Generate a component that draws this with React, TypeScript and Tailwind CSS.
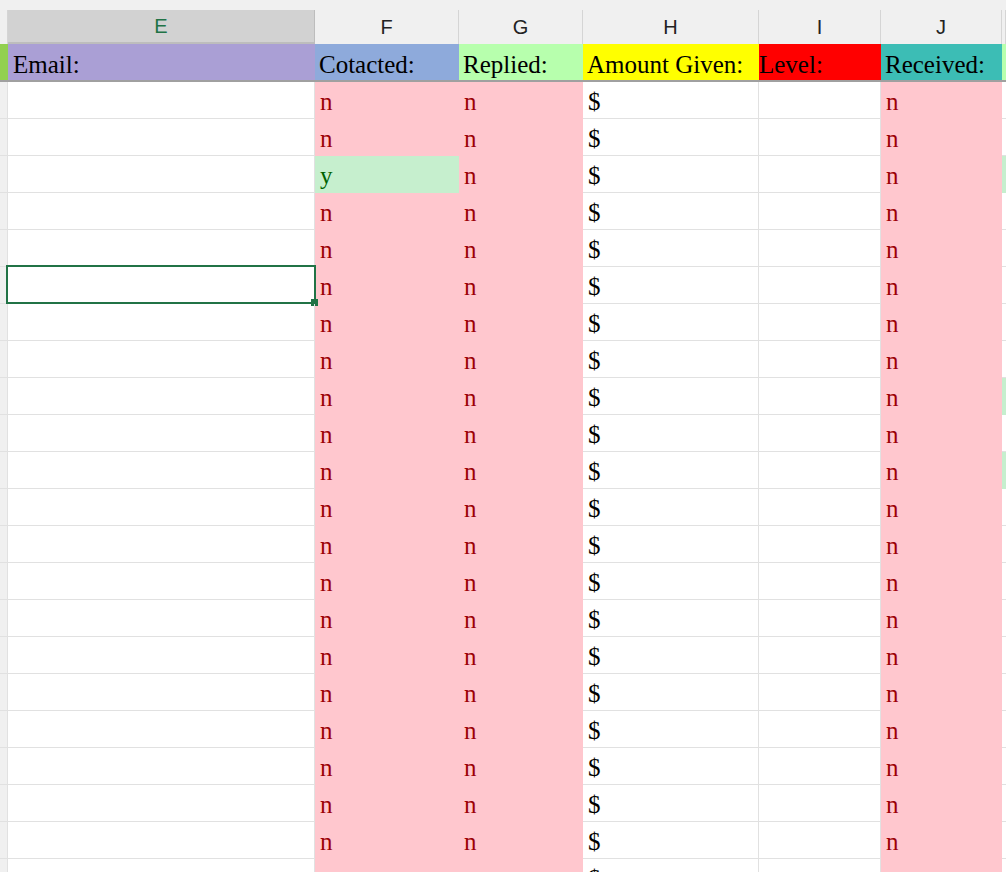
import React from "react";

const cols = ["", "E", "F", "G", "H", "I", "J", ""];
const N = 22;
const greenK = new Set([2, 8, 10]);

export default function App() {
  const serif = { fontFamily: '"Liberation Serif", "Times New Roman", serif' };
  const rows = Array.from({ length: N }, (_, i) => i);
  return (
    <div className="w-[1006px] h-[872px] overflow-hidden bg-white relative">
      <div className="h-[10px] bg-[#f0f0f0]" />
      <div className="grid grid-cols-[8px_307px_144px_124px_176px_122px_121px_4px] h-[34px] bg-[#f0f0f0] text-[20px] text-[#222]" style={{ fontFamily: '"Liberation Sans", Arial, sans-serif' }}>
        {cols.map((c, i) => (
          <div
            key={i}
            className={
              i === 1
                ? "bg-[#d2d2d2] border-b-2 border-[#217346] text-[#217346] flex items-center justify-center border-r border-[#bdbdbd]"
                : "flex items-center justify-center border-r border-[#d5d5d5]"
            }
          >
            {c}
          </div>
        ))}
      </div>
      <div className="grid grid-cols-[8px_307px_144px_124px_176px_122px_121px_4px] text-[25px]" style={serif}>
        <div className="h-[38px] bg-[#92d050] border-b-2 border-[#a0a0a0]" />
        <div className="h-[38px] bg-[#aa9fd5] border-b-2 border-[#a0a0a0] pl-[5px] leading-[42px] text-black">Email:</div>
        <div className="h-[38px] bg-[#8eaadb] border-b-2 border-[#a0a0a0] pl-[4px] leading-[42px] text-black">Cotacted:</div>
        <div className="h-[38px] bg-[#b7ffad] border-b-2 border-[#a0a0a0] pl-[4px] leading-[42px] text-black">Replied:</div>
        <div className="h-[38px] bg-[#ffff00] border-b-2 border-[#a0a0a0] pl-[4px] leading-[42px] text-black whitespace-nowrap overflow-hidden">Amount Given:</div>
        <div className="h-[38px] bg-[#ff0000] border-b-2 border-[#a0a0a0] leading-[42px] text-black whitespace-nowrap overflow-hidden">Level:</div>
        <div className="h-[38px] bg-[#3cbdb5] border-b-2 border-[#a0a0a0] pl-[4px] leading-[42px] text-black whitespace-nowrap overflow-hidden">Received:</div>
        <div className="h-[38px] bg-[#b7ffad] border-b-2 border-[#a0a0a0]" />
        {rows.map((r) => (
          <React.Fragment key={r}>
            <div className="h-[37px] border-b border-r border-[#e1e1e1] bg-[#f0f0f0]" />
            <div className="h-[37px] border-b border-r border-[#e1e1e1] relative">
              {r === 5 && (
                <div className="absolute -left-[2px] -top-[2px] w-[310px] h-[39px] border-2 border-[#217346]">
                  <div className="absolute -right-[4px] -bottom-[4px] w-[7px] h-[7px] bg-[#217346]" />
                </div>
              )}
            </div>
            {r === 2 ? (
              <div className="h-[37px] bg-[#c6efce] text-[#006100] pl-[5px] leading-[40px]">y</div>
            ) : (
              <div className="h-[37px] bg-[#ffc7ce] text-[#9c0006] pl-[5px] leading-[40px]">n</div>
            )}
            <div className="h-[37px] bg-[#ffc7ce] text-[#9c0006] pl-[5px] leading-[40px]">n</div>
            <div className="h-[37px] border-b border-r border-[#e1e1e1] pl-[5px] leading-[40px] text-black">$</div>
            <div className="h-[37px] border-b border-r border-[#e1e1e1]" />
            <div className="h-[37px] bg-[#ffc7ce] text-[#9c0006] pl-[5px] leading-[40px]">n</div>
            <div className={greenK.has(r) ? "h-[37px] bg-[#c6efce]" : "h-[37px] border-b border-[#e1e1e1]"} />
          </React.Fragment>
        ))}
      </div>
    </div>
  );
}
